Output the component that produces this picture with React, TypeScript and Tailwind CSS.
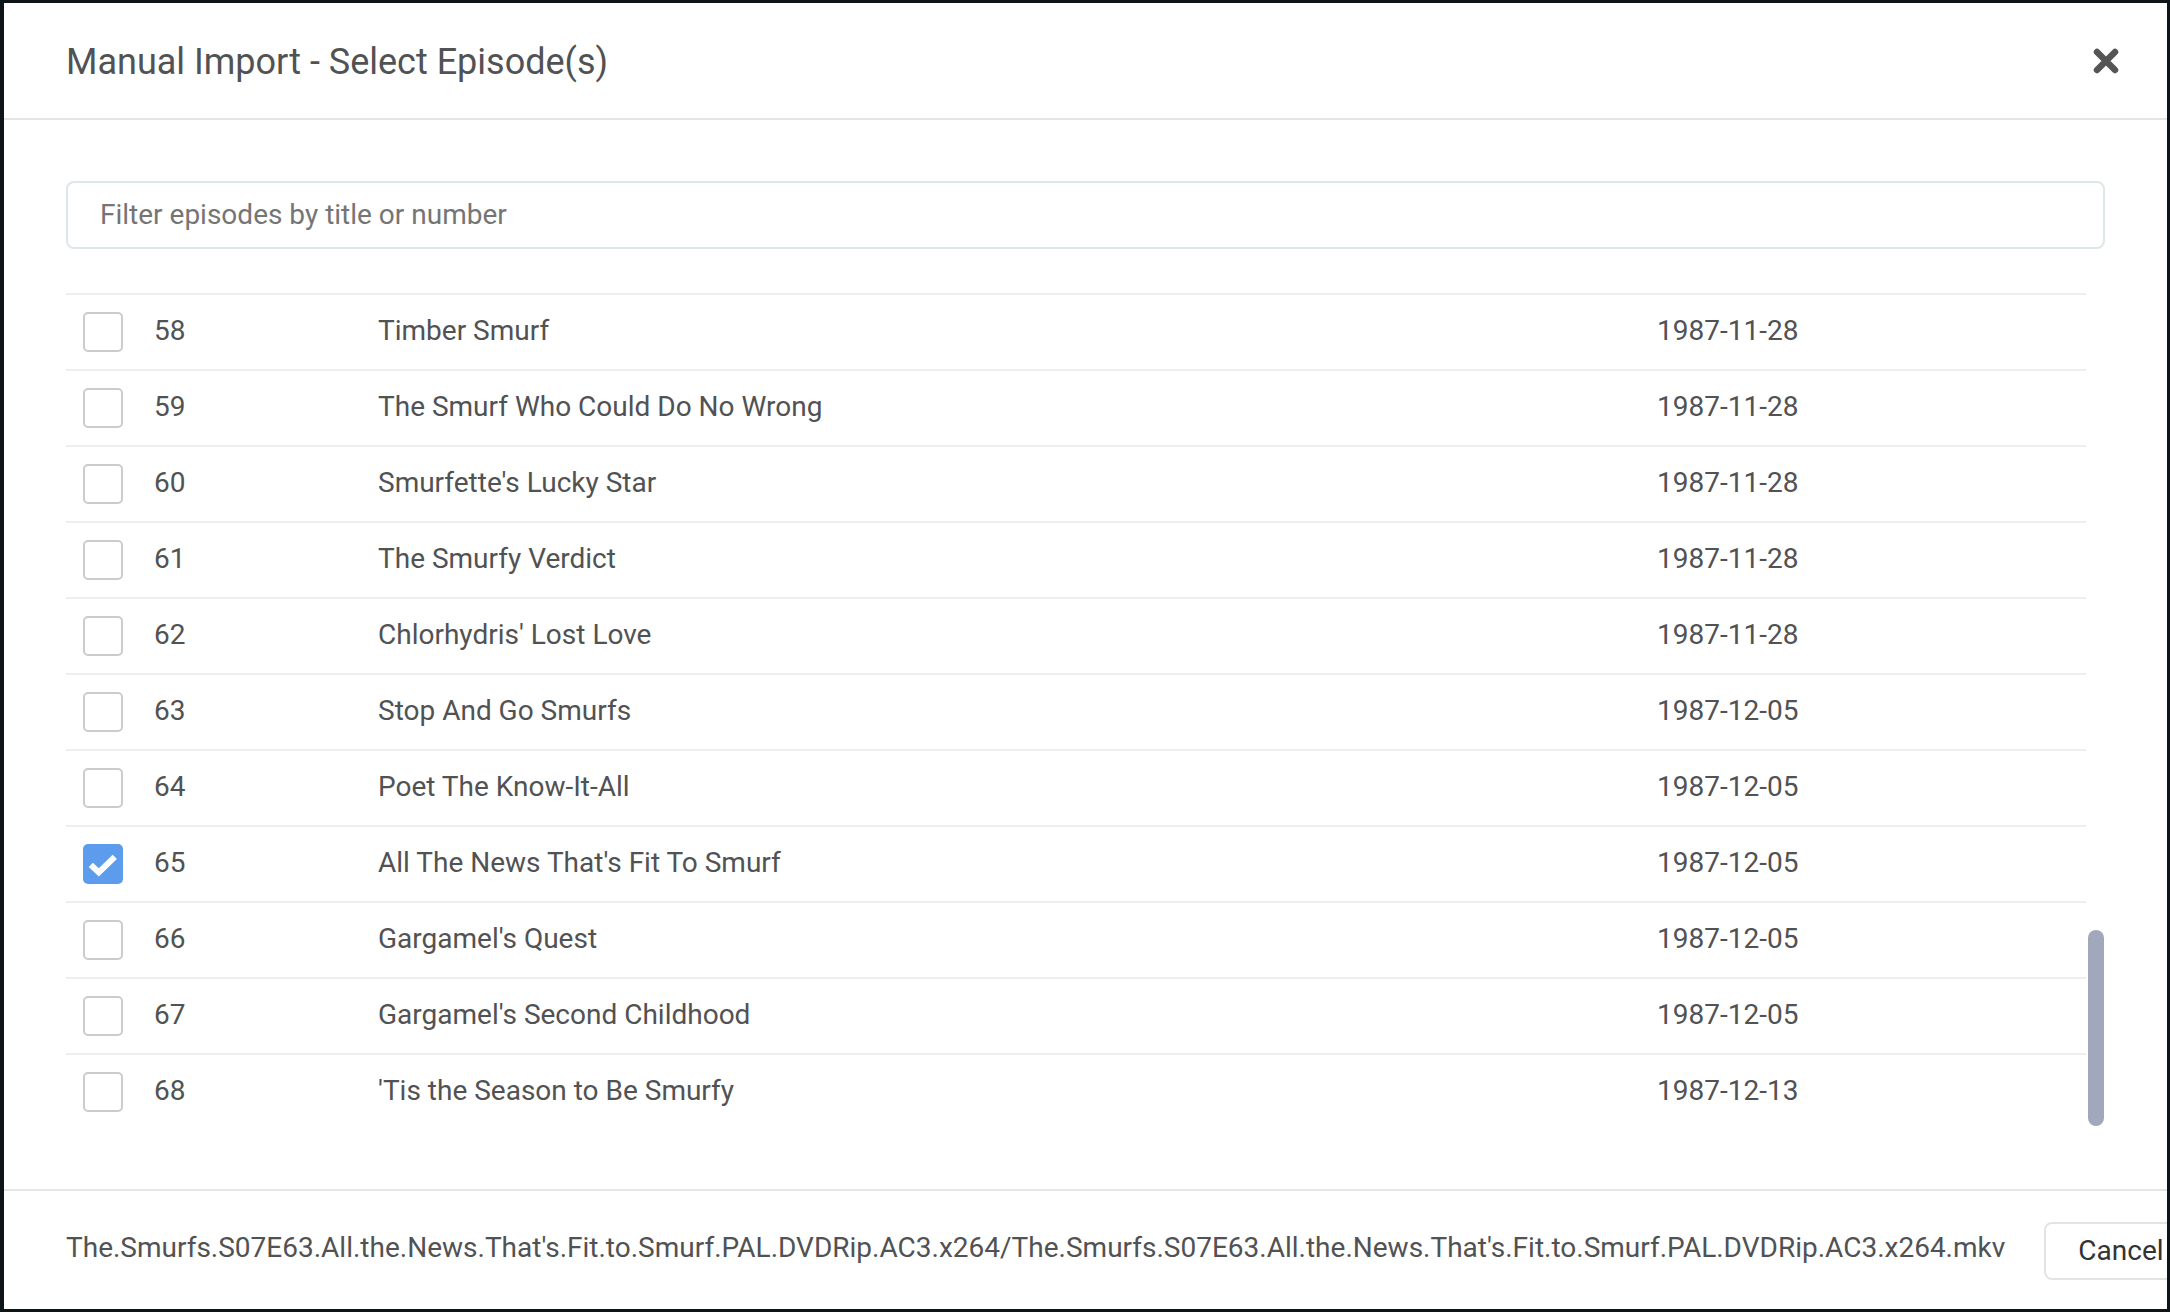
import React from "react";

type Episode = {
    number: number;
    title: string;
    airDate: string;
    selected?: boolean;
};

const EPISODES: Episode[] = [
    { number: 58, title: "Timber Smurf", airDate: "1987-11-28" },
    { number: 59, title: "The Smurf Who Could Do No Wrong", airDate: "1987-11-28" },
    { number: 60, title: "Smurfette's Lucky Star", airDate: "1987-11-28" },
    { number: 61, title: "The Smurfy Verdict", airDate: "1987-11-28" },
    { number: 62, title: "Chlorhydris' Lost Love", airDate: "1987-11-28" },
    { number: 63, title: "Stop And Go Smurfs", airDate: "1987-12-05" },
    { number: 64, title: "Poet The Know-It-All", airDate: "1987-12-05" },
    { number: 65, title: "All The News That's Fit To Smurf", airDate: "1987-12-05", selected: true },
    { number: 66, title: "Gargamel's Quest", airDate: "1987-12-05" },
    { number: 67, title: "Gargamel's Second Childhood", airDate: "1987-12-05" },
    { number: 68, title: "'Tis the Season to Be Smurfy", airDate: "1987-12-13" },
];

const FILE_PATH =
    "The.Smurfs.S07E63.All.the.News.That's.Fit.to.Smurf.PAL.DVDRip.AC3.x264/The.Smurfs.S07E63.All.the.News.That's.Fit.to.Smurf.PAL.DVDRip.AC3.x264.mkv";

function CloseIcon() {
    return (
        <svg width="26" height="26" viewBox="0 0 26 26">
            <path d="M4 4 L22 22 M22 4 L4 22" stroke="#555555" strokeWidth="6.5" strokeLinecap="round" />
        </svg>
    );
}

function Checkbox({ checked }: { checked?: boolean }) {
    if (checked) {
        return (
            <div className="w-[40px] h-[40px] rounded-[5px] bg-[#5d9cec] flex items-center justify-center">
                <svg width="40" height="40" viewBox="0 0 20 20">
                    <path d="M3.9 10.4 L7.9 14.2 L15.9 6.4" fill="none" stroke="#ffffff" strokeWidth="3" />
                </svg>
            </div>
        );
    }
    return <div className="w-[40px] h-[40px] rounded-[5px] border-2 border-[#cccccc] bg-white" />;
}

function EpisodeRow(episode: Episode) {
    return (
        <div
            key={episode.number}
            className="grid grid-cols-[88px_224px_1279px_1fr] items-center h-[76px] border-t-2 border-[#eeeeee]"
        >
            <div className="pl-[17px]">
                <Checkbox checked={episode.selected} />
            </div>
            <div className="pb-[2px]">{episode.number}</div>
            <div className="pb-[2px]">{episode.title}</div>
            <div className="pb-[2px]">{episode.airDate}</div>
        </div>
    );
}

export default function App() {
    return (
        <div className="w-[2170px] h-[1312px] bg-[#0d1519] pt-[3px] pl-[4px] overflow-hidden font-['Roboto',sans-serif] text-[#515253]">
            <div className="w-[2163px] h-[1306px] bg-white flex flex-col overflow-hidden">
                {/* header */}
                <div className="flex items-center justify-between h-[117px] pl-[62px] pr-[48px] border-b-2 border-[#e5e5e5] shrink-0">
                    <h2 className="text-[36px] leading-none pt-[2px]">Manual Import - Select Episode(s)</h2>
                    <CloseIcon />
                </div>

                {/* body */}
                <div className="flex flex-col px-[62px] pt-[61px] pb-[60px] shrink-0">
                    <div className="h-[68px] rounded-[8px] border-2 border-[#dde6e9] flex items-center pl-[32px] text-[28px] text-[#757575]">
                        Filter episodes by title or number
                    </div>
                    <div className="flex mt-[44px] text-[28px]">
                        <div className="w-[2020px] flex flex-col">
                            {EPISODES.map((episode) => EpisodeRow(episode))}
                        </div>
                        <div className="flex-1 flex flex-col justify-end pl-[2px] pb-[3px]">
                            <div className="w-[16px] h-[196px] rounded-full bg-[#a1a8bb]" />
                        </div>
                    </div>
                </div>

                {/* footer */}
                <div className="flex items-center gap-[39px] h-[118px] pl-[62px] border-t-2 border-[#e5e5e5] shrink-0">
                    <div className="whitespace-nowrap shrink-0 text-[28px] pb-[2px]">{FILE_PATH}</div>
                    <button className="shrink-0 h-[58px] mt-[4px] px-[32px] rounded-[8px] border-2 border-[#e3e3e3] text-[28px] text-[#333333] bg-white">
                        Cancel
                    </button>
                </div>
            </div>
        </div>
    );
}
